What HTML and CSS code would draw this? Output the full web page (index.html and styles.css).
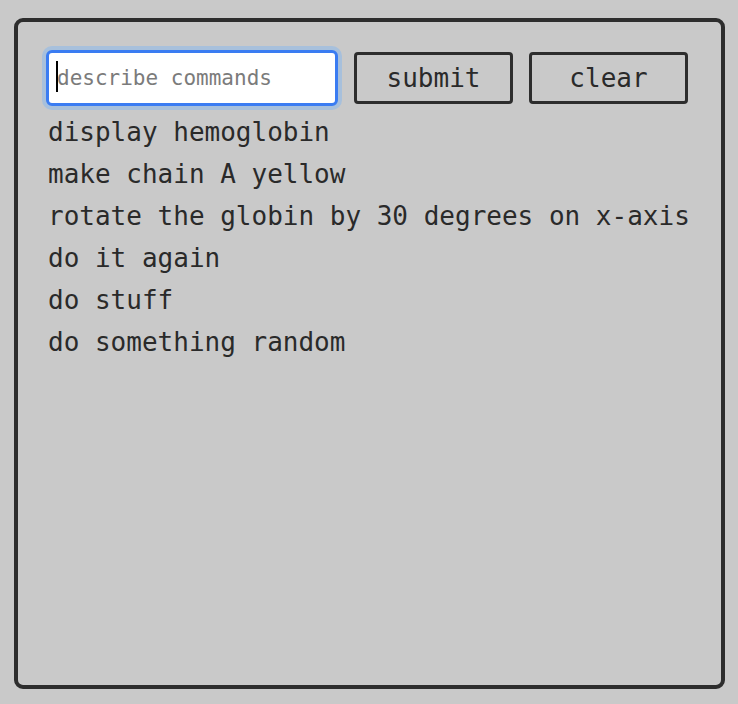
FILE: index.html
```html
<!DOCTYPE html>
<html lang="en">
<head>
    <meta charset="UTF-8">
    <meta name="viewport" content="width=device-width, initial-scale=1.0">
    <title>Commands</title>
    <link rel="stylesheet" href="styles.css">
</head>
<body>
    <div class="panel">
        <div class="command-bar">
            <div class="input-wrap">
                <input type="text" class="command-input" id="commandInput" placeholder="describe commands">
                <span class="caret" id="caret"></span>
            </div>
            <button class="bar-button" id="submitButton">submit</button>
            <button class="bar-button" id="clearButton">clear</button>
        </div>
        <ul class="command-list" id="commandList">
            <li>display hemoglobin</li>
            <li>make chain A yellow</li>
            <li>rotate the globin by 30 degrees on x-axis</li>
            <li>do it again</li>
            <li>do stuff</li>
            <li>do something random</li>
        </ul>
    </div>

    <script>
        const input = document.getElementById('commandInput');
        const list = document.getElementById('commandList');
        const caret = document.getElementById('caret');

        // the idle caret only shows while the box is empty
        input.addEventListener('input', () => {
            caret.style.display = input.value ? 'none' : 'block';
        });

        document.getElementById('submitButton').addEventListener('click', () => {
            const text = input.value.trim();
            if (!text) return;
            const item = document.createElement('li');
            item.textContent = text;
            list.appendChild(item);
            input.value = '';
            caret.style.display = 'block';
            input.focus();
        });

        input.addEventListener('keydown', (event) => {
            if (event.key === 'Enter') {
                document.getElementById('submitButton').click();
            }
        });

        document.getElementById('clearButton').addEventListener('click', () => {
            list.innerHTML = '';
            input.focus();
        });
    </script>
</body>
</html>
```

FILE: styles.css
```css
body {
    margin: 0;
    padding: 18px 13px 15px 14px;
    background-color: #c9c9c9;
    font-family: 'DejaVu Sans Mono', monospace;
    color: #2a2a2a;
}
.panel {
    box-sizing: border-box;
    height: 671px;
    border: 4px solid #2d2d2d;
    border-radius: 9px;
    padding: 28px;
}
.command-bar {
    display: flex;
    align-items: center;
    gap: 17px;
}
.input-wrap {
    position: relative;
    flex: none;
}
.command-input {
    display: block;
    box-sizing: border-box;
    width: 292px;
    height: 56px;
    padding: 0 8px;
    border: 3px solid #3a7cf2;
    border-radius: 6px;
    background: #ffffff;
    box-shadow: 0 0 0 4px #a7c0dc;
    outline: none;
    font-family: 'DejaVu Sans Mono', monospace;
    font-size: 21px;
    color: #222222;
    caret-color: #000000;
}
.command-input::placeholder {
    color: #7b7b7b;
}
.caret {
    position: absolute;
    left: 10px;
    top: 11px;
    width: 2px;
    height: 31px;
    background: #000000;
    pointer-events: none;
}
.bar-button {
    flex: none;
    box-sizing: border-box;
    width: 159px;
    height: 52px;
    margin-left: -1px;
    border: 3px solid #2d2d2d;
    border-radius: 4px;
    background: transparent;
    font-family: 'DejaVu Sans Mono', monospace;
    font-size: 26px;
    color: #2a2a2a;
    cursor: pointer;
}
.bar-button:hover {
    background: #bdbdbd;
}
.command-list {
    list-style: none;
    margin: 5px 0 0 0;
    padding: 0 0 0 2px;
    font-size: 26px;
    line-height: 42px;
}
```
